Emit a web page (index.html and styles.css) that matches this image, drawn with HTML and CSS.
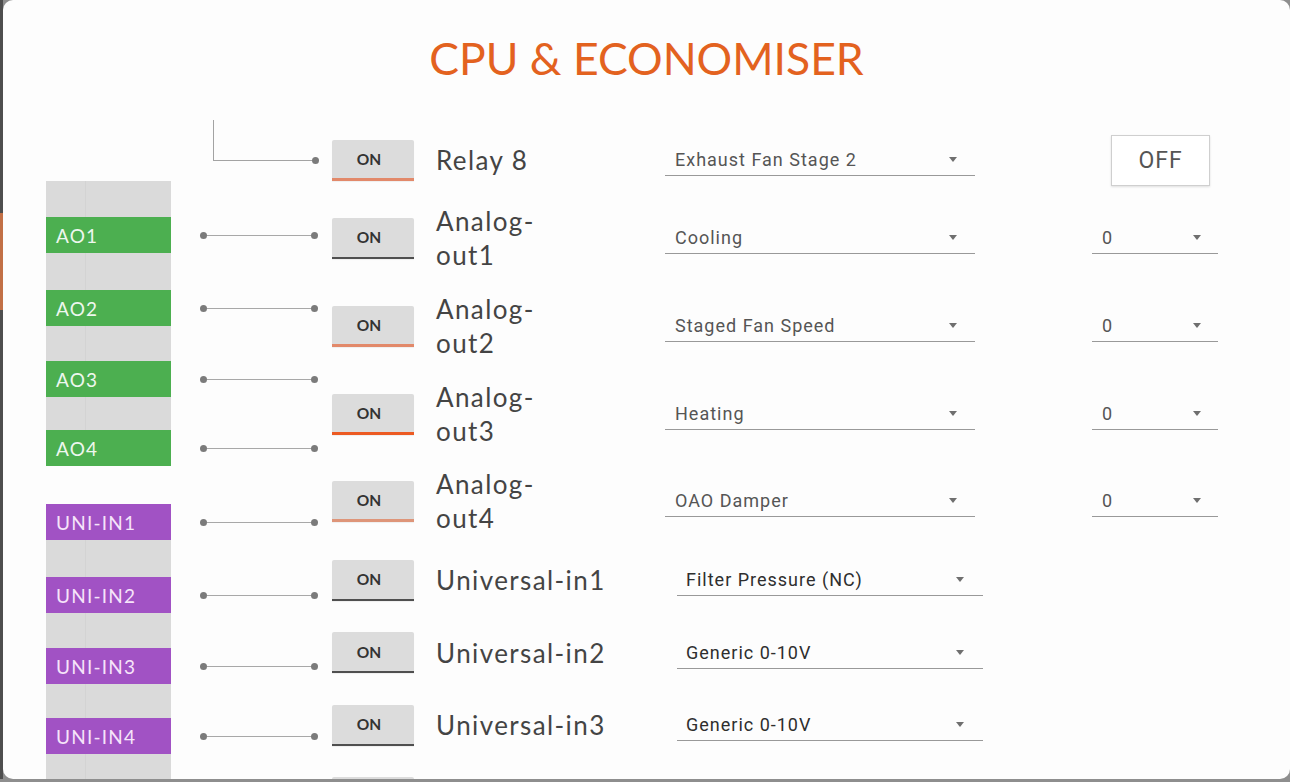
FILE: index.html
```html
<!DOCTYPE html>
<html>
<head>
<meta charset="utf-8">
<link rel="stylesheet" href="styles.css">
</head>
<body>
<div class="screen">
  <div class="edge"><div class="edge-mark"></div></div>
  <div class="card">
    <h1 class="title">CPU &amp; ECONOMISER</h1>
    <div class="board">
      <div class="pins">
        <div class="elbow"><div class="bend"></div><span class="dot"></span></div>

        <div class="pin-group group-ao">
          <div class="pin-row r1"><div class="pin-cell"><div class="tag tag-ao">AO1</div></div><div class="wire"><span class="dot"></span><span class="line"></span><span class="dot"></span></div></div>
          <div class="pin-row r2"><div class="pin-cell"><div class="tag tag-ao">AO2</div></div><div class="wire"><span class="dot"></span><span class="line"></span><span class="dot"></span></div></div>
          <div class="pin-row r3"><div class="pin-cell"><div class="tag tag-ao">AO3</div></div><div class="wire"><span class="dot"></span><span class="line"></span><span class="dot"></span></div></div>
          <div class="pin-row r4"><div class="pin-cell"><div class="tag tag-ao">AO4</div></div><div class="wire"><span class="dot"></span><span class="line"></span><span class="dot"></span></div></div>
        </div>

        <div class="pin-group group-ui">
          <div class="pin-row r1"><div class="pin-cell"><div class="tag tag-ui">UNI-IN1</div></div><div class="wire"><span class="dot"></span><span class="line"></span><span class="dot"></span></div></div>
          <div class="pin-row r2"><div class="pin-cell"><div class="tag tag-ui">UNI-IN2</div></div><div class="wire"><span class="dot"></span><span class="line"></span><span class="dot"></span></div></div>
          <div class="pin-row r3"><div class="pin-cell"><div class="tag tag-ui">UNI-IN3</div></div><div class="wire"><span class="dot"></span><span class="line"></span><span class="dot"></span></div></div>
          <div class="pin-row r4"><div class="pin-cell"><div class="tag tag-ui">UNI-IN4</div></div><div class="wire"><span class="dot"></span><span class="line"></span><span class="dot"></span></div></div>
          <div class="pin-tail"></div>
        </div>
      </div>

      <div class="rows">
        <div class="io-row relay">
          <button class="toggle accent-soft">ON</button>
          <div class="io-name">Relay 8</div>
          <div class="select select-main"><span class="value">Exhaust Fan Stage 2</span><span class="caret"></span></div>
          <button class="off-btn">OFF</button>
        </div>
        <div class="io-row analog">
          <button class="toggle">ON</button>
          <div class="io-name">Analog-<br>out1</div>
          <div class="select select-main"><span class="value">Cooling</span><span class="caret"></span></div>
          <div class="select select-num"><span class="value">0</span><span class="caret"></span></div>
        </div>
        <div class="io-row analog">
          <button class="toggle accent-soft">ON</button>
          <div class="io-name">Analog-<br>out2</div>
          <div class="select select-main"><span class="value">Staged Fan Speed</span><span class="caret"></span></div>
          <div class="select select-num"><span class="value">0</span><span class="caret"></span></div>
        </div>
        <div class="io-row analog">
          <button class="toggle accent-strong">ON</button>
          <div class="io-name">Analog-<br>out3</div>
          <div class="select select-main"><span class="value">Heating</span><span class="caret"></span></div>
          <div class="select select-num"><span class="value">0</span><span class="caret"></span></div>
        </div>
        <div class="io-row analog last">
          <button class="toggle accent-pale">ON</button>
          <div class="io-name">Analog-<br>out4</div>
          <div class="select select-main"><span class="value">OAO Damper</span><span class="caret"></span></div>
          <div class="select select-num"><span class="value">0</span><span class="caret"></span></div>
        </div>
        <div class="io-row uni">
          <button class="toggle">ON</button>
          <div class="io-name">Universal-in1</div>
          <div class="select select-uni"><span class="value">Filter Pressure (NC)</span><span class="caret"></span></div>
        </div>
        <div class="io-row uni">
          <button class="toggle">ON</button>
          <div class="io-name">Universal-in2</div>
          <div class="select select-uni"><span class="value">Generic 0-10V</span><span class="caret"></span></div>
        </div>
        <div class="io-row uni">
          <button class="toggle">ON</button>
          <div class="io-name">Universal-in3</div>
          <div class="select select-uni"><span class="value">Generic 0-10V</span><span class="caret"></span></div>
        </div>
        <div class="io-row uni">
          <span class="toggle"></span>
        </div>
      </div>
    </div>
  </div>
</div>
</body>
</html>
```

FILE: styles.css
```css
html, body {
  margin: 0;
  padding: 0;
}
body {
  width: 1290px;
  height: 782px;
  overflow: hidden;
  background: #8c8c8c;
  font-family: Lato, "Noto Sans", sans-serif;
}
.screen {
  display: flex;
  height: 782px;
  padding-bottom: 3px;
  box-sizing: border-box;
  background: #8e8e8e;
}
.edge {
  width: 3px;
  flex: none;
  background: #4e4e4e;
}
.edge-mark {
  margin-top: 213px;
  height: 97px;
  background: #c27046;
}
.card {
  flex: 1;
  height: 779px;
  background: #fdfdfd;
  border-radius: 10px;
  overflow: hidden;
  padding-top: 30px;
  box-sizing: border-box;
}
.title {
  margin: 0 0 34px 0;
  text-align: center;
  font-family: Lato, sans-serif;
  font-weight: 400;
  font-size: 44.5px;
  line-height: 56px;
  color: #e3621f;
}
.board {
  display: flex;
  align-items: flex-start;
  padding-left: 43px;
}
.pins {
  width: 286px;
  flex: none;
}
.elbow {
  display: flex;
  align-items: flex-end;
}
.bend {
  margin-left: 167px;
  width: 98px;
  height: 40px;
  border-left: 1px solid #a3a3a3;
  border-bottom: 1px solid #a3a3a3;
}
.elbow .dot {
  margin-bottom: -3px;
}
.dot {
  width: 7px;
  height: 7px;
  border-radius: 50%;
  background: #7b7b7b;
  flex: none;
}
.pin-group {
  display: flex;
  flex-direction: column;
}
.group-ao {
  margin-top: 20px;
}
.group-ui {
  margin-top: 38px;
}
.pin-row {
  display: flex;
  align-items: flex-end;
}
.pin-cell,
.pin-tail {
  width: 125px;
  flex: none;
  background: linear-gradient(to right, transparent 39px, #d3d3d3 39px, #d3d3d3 40px, transparent 40px), #dadada;
}
.group-ao .r1 .pin-cell { padding-top: 36px; }
.pin-row.r2 .pin-cell { padding-top: 37px; }
.pin-row.r3 .pin-cell { padding-top: 35px; }
.group-ao .r4 .pin-cell { padding-top: 33px; }
.group-ui .r4 .pin-cell { padding-top: 34px; }
.pin-tail {
  height: 40px;
}
.tag {
  height: 36px;
  display: flex;
  align-items: center;
  padding-left: 10px;
  font-size: 19px;
  letter-spacing: 1.2px;
  box-sizing: border-box;
}
.tag-ao {
  background: #4caf50;
  color: #eef7ee;
}
.tag-ui {
  background: #a152c4;
  color: #f6e4fa;
}
.wire {
  display: flex;
  align-items: center;
  width: 118px;
  height: 36px;
  margin-left: 29px;
  flex: none;
}
.wire .line {
  flex: 1;
  height: 1px;
  background: #a8a8a8;
}
.rows {
  flex: 1;
  padding-top: 6px;
}
.io-row {
  display: flex;
  align-items: center;
  height: 88px;
}
.io-row.relay { height: 68px; }
.io-row.analog.last { height: 86px; }
.io-row.uni { height: 72.5px; }
.toggle {
  display: block;
  width: 82px;
  height: 41px;
  flex: none;
  box-sizing: border-box;
  padding: 0 8px 0 0;
  border: none;
  border-bottom: 2px solid #4f4f4f;
  border-radius: 2px 2px 0 0;
  background: #dcdcdc;
  font-family: Lato, sans-serif;
  font-weight: 700;
  font-size: 15.5px;
  color: #333;
  box-shadow: 0 1px 1px rgba(0,0,0,0.06);
}
.toggle.accent-soft { border-bottom: 3px solid #e2896a; }
.toggle.accent-strong { border-bottom: 3px solid #ec5a22; }
.toggle.accent-pale { border-bottom: 3px solid #de9579; }
.io-name {
  width: 229px;
  margin-left: 22px;
  flex: none;
  font-size: 26px;
  letter-spacing: 1.4px;
  line-height: 34px;
  color: #444;
}
.select {
  display: flex;
  align-items: center;
  height: 32px;
  box-sizing: border-box;
  border-bottom: 1px solid #999;
  padding: 0 18px 0 10px;
  font-family: Roboto, sans-serif;
  font-size: 18px;
  letter-spacing: 1px;
  color: #555;
  flex: none;
}
.select .value { flex: 1; }
.caret {
  width: 0;
  height: 0;
  border-left: 4px solid transparent;
  border-right: 4px solid transparent;
  border-top: 5px solid #6f6f6f;
}
.select-main { width: 310px; }
.select-num {
  width: 126px;
  margin-left: 117px;
  padding-right: 17px;
}
.select-uni {
  width: 306px;
  margin-left: 12px;
  padding-left: 9px;
  padding-right: 19px;
  color: #2e2e2e;
}
.off-btn {
  margin-left: 136px;
  width: 99px;
  height: 51px;
  flex: none;
  border: 1px solid #cfcfcf;
  background: #fff;
  font-family: Roboto, sans-serif;
  font-size: 23px;
  letter-spacing: 1px;
  color: #555;
  box-shadow: 0 1px 2px rgba(0,0,0,0.12);
}
```
